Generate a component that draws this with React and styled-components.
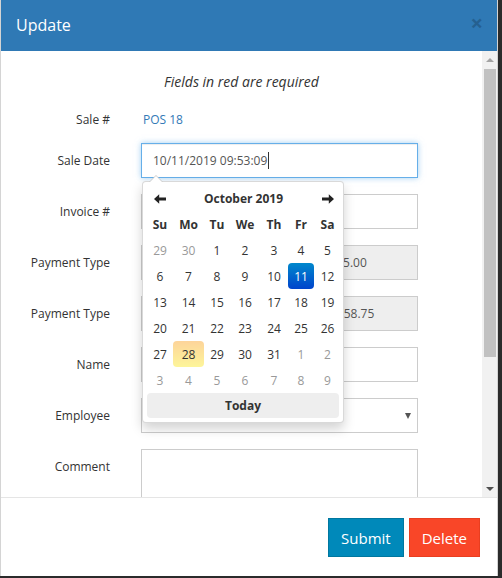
import React from 'react'
import styled, { createGlobalStyle, css } from 'styled-components'

const Global = createGlobalStyle`
  html, body {
    margin: 0;
    padding: 0;
    background: #2b2b2b;
  }
  body {
    font-family: "Open Sans", "Liberation Sans", sans-serif;
    font-size: 12px;
    color: #333;
  }
  * { box-sizing: border-box; }
`

const Modal = styled.div`
  width: 498px;
  height: 576px;
  background: #fff;
  border-left: 1px solid #d4d4d4;
  border-right: 1px solid #d4d4d4;
  display: flex;
  flex-direction: column;
`

const Header = styled.div`
  height: 51px;
  background: #2f79b5;
  display: flex;
  align-items: center;
  justify-content: space-between;
  padding: 0 14px 2px 15px;
`

const Title = styled.h4`
  margin: 0;
  color: #fff;
  font-size: 16px;
  font-weight: 400;
`

const Close = styled.span`
  font-size: 22px;
  font-weight: 700;
  color: #000;
  opacity: 0.2;
  line-height: 1;
  margin-top: -6px;
`

const Body = styled.div`
  height: 446px;
  display: flex;
  overflow: hidden;
`

const Content = styled.div`
  flex: 1;
  padding-top: 21px;
`

const Hint = styled.p`
  margin: 0 0 18px;
  text-align: center;
  font-style: italic;
  font-size: 14px;
  line-height: 20px;
`

const Row = styled.div`
  display: grid;
  grid-template-columns: 109px 277px;
  column-gap: 31px;
  align-items: start;
  margin-bottom: ${p => (p.$plain ? '13px' : '16px')};
`

const Label = styled.label`
  text-align: right;
  line-height: ${p => (p.$plain ? '20px' : '35px')};
`

const Value = styled.span`
  color: #337ab7;
  line-height: 20px;
  padding-left: 2px;
`

const Field = styled.div`
  position: relative;
`

const inputBase = css`
  width: 100%;
  height: 35px;
  border: 1px solid #ccc;
  padding: 0 11px;
  font-family: inherit;
  font-size: 12px;
  color: #555;
  background: #fff;
  outline: none;
  display: flex;
  align-items: center;
  white-space: nowrap;
  overflow: hidden;
`

const Input = styled.div`
  ${inputBase}
  ${p => p.$focus && css`
    border-color: #66afe9;
    box-shadow: inset 0 1px 1px rgba(0, 0, 0, .075), 0 0 6px rgba(102, 175, 233, .6);
  `}
  ${p => p.$disabled && css`
    background: #eee;
  `}
`

const Caret = styled.span`
  width: 1px;
  height: 17px;
  background: #333;
  margin-left: 1px;
`

const Select = styled.div`
  ${inputBase}
  justify-content: space-between;
  padding-right: 6px;
`

const SelectArrow = styled.span`
  width: 0;
  height: 0;
  border-left: 3.5px solid transparent;
  border-right: 3.5px solid transparent;
  border-top: 6px solid #555;
`

const TextArea = styled.div`
  ${inputBase}
  height: 70px;
`

const Picker = styled.div`
  position: absolute;
  top: 38px;
  left: 1px;
  z-index: 10;
  width: 202px;
  padding: 4px;
  background: #fff;
  border: 1px solid rgba(0, 0, 0, .15);
  border-radius: 4px;
  box-shadow: 0 6px 12px rgba(0, 0, 0, .175);

  &::before, &::after {
    content: '';
    position: absolute;
    border-left: 7px solid transparent;
    border-right: 7px solid transparent;
    border-bottom: 7px solid #ccc;
    top: -7px;
    left: 6px;
  }
  &::after {
    border-left-width: 6px;
    border-right-width: 6px;
    border-bottom: 6px solid #fff;
    top: -6px;
    left: 7px;
  }
`

const Grid = styled.div`
  display: grid;
  grid-template-columns: 26px 31px 26px 30px 28px 26px 27px;
  grid-template-rows: 25px;
  grid-auto-rows: 26px;
  text-align: center;
`

const Cell = styled.div`
  display: flex;
  align-items: center;
  justify-content: center;
  border-radius: 4px;
  color: ${p => (p.$muted ? '#999' : '#333')};
  font-weight: ${p => (p.$bold ? 700 : 400)};
  ${p => p.$span && css`grid-column: span ${p.$span};`}
  ${p => p.$active && css`
    color: #fff;
    background: linear-gradient(to bottom, #0088cc, #0044cc);
  `}
  ${p => p.$today && css`
    background: linear-gradient(to bottom, #fdd49a, #fdf59a);
  `}
`

const TodayButton = styled.div`
  height: 25px;
  background: #eee;
  border-radius: 4px;
  font-weight: 700;
  display: flex;
  align-items: center;
  justify-content: center;
`

const Scrollbar = styled.div`
  width: 15px;
  background: #f1f1f1;
  display: flex;
  flex-direction: column;
`

const ScrollArrow = styled.div`
  height: 17px;
  display: flex;
  align-items: center;
  justify-content: center;
  &::after {
    content: '';
    border-left: 4px solid transparent;
    border-right: 4px solid transparent;
    ${p => (p.$down
      ? css`border-top: 4px solid #505050;`
      : css`border-bottom: 4px solid #a3a3a3;`)}
  }
`

const Thumb = styled.div`
  height: 288px;
  margin: 1px 1px 0 2px;
  background: #c1c1c1;
`

const Spacer = styled.div`
  flex: 1;
`

const Footer = styled.div`
  border-top: 1px solid #e5e5e5;
  padding: 20px 17px 19px;
  display: flex;
  justify-content: flex-end;
  gap: 5px;
`

const Button = styled.button`
  height: 39px;
  padding: 0 12px;
  font-family: inherit;
  font-size: 15px;
  color: #fff;
  border: 1px solid ${p => (p.$danger ? '#e93e20' : '#00779f')};
  background: ${p => (p.$danger ? '#f94628' : '#0089ba')};
`

const Arrow = ({ flip }) => (
  <svg width="12" height="10" viewBox="0 0 12 10" style={flip ? { transform: 'scaleX(-1)' } : undefined}>
    <path d="M0 5L5.2 0.3V3.4H12V6.6H5.2V9.7Z" fill="#222" />
  </svg>
)

const weeks = [
  [[29, 1], [30, 1], 1, 2, 3, 4, 5],
  [6, 7, 8, 9, 10, 11, 12],
  [13, 14, 15, 16, 17, 18, 19],
  [20, 21, 22, 23, 24, 25, 26],
  [27, 28, 29, 30, 31, [1, 1], [2, 1]],
  [[3, 1], [4, 1], [5, 1], [6, 1], [7, 1], [8, 1], [9, 1]],
]

const DatePicker = () => (
  <Picker>
    <Grid>
      <Cell><Arrow /></Cell>
      <Cell $bold $span={5}>October 2019</Cell>
      <Cell><Arrow flip /></Cell>
      {['Su', 'Mo', 'Tu', 'We', 'Th', 'Fr', 'Sa'].map(d => (
        <Cell key={d} $bold>{d}</Cell>
      ))}
      {weeks.flat().map((d, i) => {
        const muted = Array.isArray(d)
        const n = muted ? d[0] : d
        return (
          <Cell key={i} $muted={muted} $active={!muted && n === 11} $today={!muted && n === 28}>
            {n}
          </Cell>
        )
      })}
    </Grid>
    <TodayButton>Today</TodayButton>
  </Picker>
)

export default function App() {
  return (
    <>
      <Global />
      <Modal>
        <Header>
          <Title>Update</Title>
          <Close>×</Close>
        </Header>
        <Body>
          <Content>
            <Hint>Fields in red are required</Hint>
            <Row $plain>
              <Label $plain>Sale #</Label>
              <Value>POS 18</Value>
            </Row>
            <Row>
              <Label>Sale Date</Label>
              <Field>
                <Input $focus>10/11/2019 09:53:09<Caret /></Input>
                <DatePicker />
              </Field>
            </Row>
            <Row>
              <Label>Invoice #</Label>
              <Input />
            </Row>
            <Row>
              <Label>Payment Type</Label>
              <Input $disabled>Visa Credit Card - Amount Due: $25.00</Input>
            </Row>
            <Row>
              <Label>Payment Type</Label>
              <Input $disabled>Cash Payment - Amount Due: $1,158.75</Input>
            </Row>
            <Row>
              <Label>Name</Label>
              <Input />
            </Row>
            <Row>
              <Label>Employee</Label>
              <Select>Lyn Wang<SelectArrow /></Select>
            </Row>
            <Row>
              <Label>Comment</Label>
              <TextArea />
            </Row>
          </Content>
          <Scrollbar>
            <ScrollArrow />
            <Thumb />
            <Spacer />
            <ScrollArrow $down />
          </Scrollbar>
        </Body>
        <Footer>
          <Button>Submit</Button>
          <Button $danger>Delete</Button>
        </Footer>
      </Modal>
    </>
  )
}
